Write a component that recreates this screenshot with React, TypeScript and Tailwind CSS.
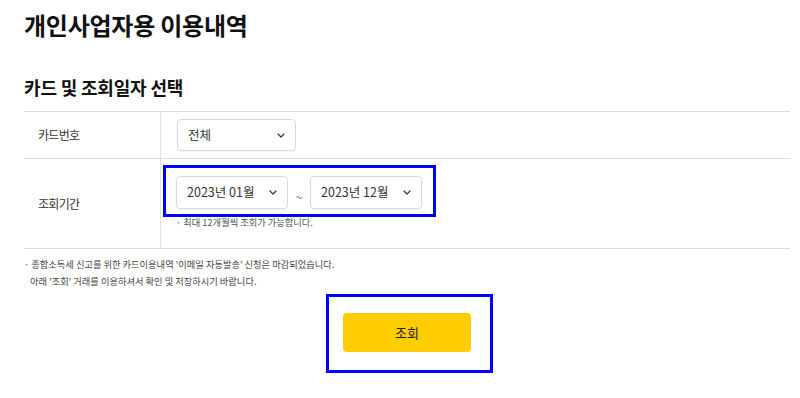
function Chevron() {
  return (
    <svg width="8" height="5" viewBox="0 0 8 5" fill="none" className="text-[#333]">
      <path d="M1 1l3 3 3-3" stroke="currentColor" strokeWidth="1.2" strokeLinecap="round" strokeLinejoin="round" />
    </svg>
  )
}

function SelectBox({ label, width, height }: { label: string; width: string; height: string }) {
  return (
    <div
      className={`${width} ${height} flex items-center justify-between rounded-[4px] border border-[#d9d9d9] bg-white pl-[10px] pr-[10px] text-[12.5px] text-[#333] shadow-[0_1px_1px_rgba(0,0,0,0.04)]`}
    >
      <span>{label}</span>
      <Chevron />
    </div>
  )
}

export default function App() {
  return (
    <div className="relative h-[398px] w-[800px] overflow-hidden bg-white font-['Noto_Sans_CJK_KR',sans-serif] text-[#222]">
      <div className="w-[790px] pl-6">
        <h1 className="pt-[7px] text-[24px] font-bold leading-[36px] tracking-[-0.01em] text-[#111]">
          개인사업자용 이용내역
        </h1>
        <h2 className="mt-[31px] text-[18px] font-bold leading-[27px] tracking-[-0.01em] text-[#111]">
          카드 및 조회일자 선택
        </h2>

        {/* 조회 조건 테이블 */}
        <div className="mt-[10px] border-t border-b border-[#dcdcdc]">
          <div className="flex border-b border-[#dcdcdc]">
            <div className="flex w-[137px] items-center border-r border-[#e3e3e3] pl-[14px] text-[12px] tracking-[-0.06em] text-[#333]">
              카드번호
            </div>
            <div className="flex h-[46px] items-center pl-[16px]">
              <SelectBox label="전체" width="w-[119px]" height="h-[32px]" />
            </div>
          </div>
          <div className="flex">
            <div className="flex w-[137px] items-center border-r border-[#e3e3e3] pl-[14px] text-[12px] tracking-[-0.06em] text-[#333]">
              조회기간
            </div>
            <div className="pl-[15px] pt-[17px] pb-[18px]">
              <div className="flex items-center">
                <SelectBox label="2023년 01월" width="w-[112px]" height="h-[33px]" />
                <span className="w-[22px] pt-[8px] text-center text-[12px] leading-none text-[#666]">~</span>
                <SelectBox label="2023년 12월" width="w-[112px]" height="h-[33px]" />
              </div>
              <p className="mt-[6px] text-[9.25px] leading-[15px] text-[#555]">
                · 최대 12개월씩 조회가 가능합니다.
              </p>
            </div>
          </div>
        </div>

        <div className="mt-[7px] text-[9.25px] leading-[17px] text-[#444]">
          <p>· 종합소득세 신고를 위한 카드이용내역 '이메일 자동발송' 신청은 마감되었습니다.</p>
          <p className="pl-[6px]">아래 '조회' 거래를 이용하셔서 확인 및 저장하시기 바랍니다.</p>
        </div>

        <div className="mt-[23px] flex justify-center">
          <button className="h-[39px] w-[128px] rounded-[4px] bg-[#ffcc00] text-[13px] text-[#222]">
            조회
          </button>
        </div>
      </div>

      {/* annotation boxes */}
      <div className="absolute left-[163px] top-[165px] h-[52px] w-[273px] border-[3px] border-[#0000ff]" />
      <div className="absolute left-[326px] top-[294px] h-[79px] w-[167px] border-[3px] border-[#0000ff]" />
    </div>
  )
}
